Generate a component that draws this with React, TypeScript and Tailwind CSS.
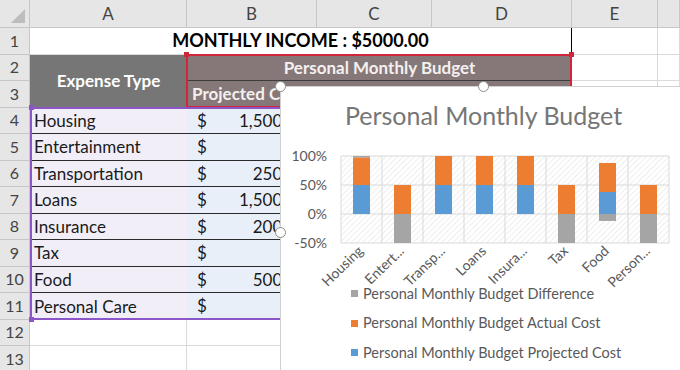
import React from 'react';

const font = { fontFamily: 'Lato, "Open Sans", sans-serif' };

const rows = [
  { name: 'Housing', value: '1,500.00' },
  { name: 'Entertainment', value: '' },
  { name: 'Transportation', value: '250.00' },
  { name: 'Loans', value: '1,500.00' },
  { name: 'Insurance', value: '200.00' },
  { name: 'Tax', value: '' },
  { name: 'Food', value: '500.00' },
  { name: 'Personal Care', value: '' },
];

const cats = ['Housing', 'Entert...', 'Transp...', 'Loans', 'Insura...', 'Tax', 'Food', 'Person...'];

// stacked values in percent
const bars = [
  { blue: [0, 50], orange: [50, 97], gray: [97, 100] },
  { orange: [0, 50], gray: [-50, 0] },
  { blue: [0, 50], orange: [50, 100] },
  { blue: [0, 50], orange: [50, 100] },
  { blue: [0, 50], orange: [50, 100] },
  { orange: [0, 50], gray: [-50, 0] },
  { blue: [0, 38], orange: [38, 88], gray: [-12, 0] },
  { orange: [0, 50], gray: [-50, 0] },
];

const colors: Record<string, string> = { blue: '#5b9bd5', orange: '#ed7d31', gray: '#a5a5a5' };

const Header = ({ children }: { children?: React.ReactNode }) => (
  <div className="bg-[#e6e6e6] border-r border-b border-[#c6c6c6] flex items-center justify-center text-[17px] text-[#444]">
    {children}
  </div>
);

const RowNum = ({ n }: { n: number }) => (
  <div className="bg-[#e6e6e6] border-r border-b border-[#c6c6c6] flex items-center justify-center text-[16px] text-[#444]">
    {n}
  </div>
);

const Cell = ({ className = '' }: { className?: string }) => (
  <div className={`bg-white border-r border-b border-[#dadada] ${className}`} />
);

const Handle = ({ className }: { className: string }) => (
  <div className={`absolute w-[5px] h-[5px] ${className}`} />
);

const Chart = () => {
  const x0 = 60;
  const cw = 41;
  const top = 25;
  const zero = 83;
  const k = 0.58;
  const y = (v: number) => zero - v * k;
  return (
    <div className="absolute left-[280px] top-[86px] w-[400px] h-[284px] bg-white border-l border-t border-[#d0d0d0] flex flex-col">
      <div className="pt-[13px] h-[44px] pl-[6px] text-center text-[25px] leading-[30px] text-[#767676]">
        Personal Monthly Budget
      </div>
      <svg width="400" height="148" className="block overflow-visible">
        <defs>
          <pattern id="hatch" width="4" height="4" patternUnits="userSpaceOnUse" patternTransform="rotate(45)">
            <line x1="0" y1="0" x2="0" y2="4" stroke="#e2e2e2" strokeWidth="1.2" />
          </pattern>
        </defs>
        <rect x={x0} y={top} width={cw * 8} height={zero - top + 29} fill="url(#hatch)" />
        {[100, 50, 0, -50].map((v) => (
          <g key={v}>
            <line x1={x0} x2={x0 + cw * 8} y1={y(v)} y2={y(v)} stroke="#d9d9d9" />
            <text x={46} y={y(v) + 5} textAnchor="end" fontSize="14" fill="#595959" style={font}>
              {v}%
            </text>
          </g>
        ))}
        {Array.from({ length: 9 }).map((_, i) => (
          <line key={i} x1={x0 + i * cw} x2={x0 + i * cw} y1={top} y2={y(-50)} stroke="#d9d9d9" />
        ))}
        {bars.map((b, i) =>
          (['gray', 'orange', 'blue'] as const).map((key) => {
            const seg = (b as Record<string, number[] | undefined>)[key];
            if (!seg) return null;
            return (
              <rect
                key={key + i}
                x={x0 + i * cw + 12}
                y={y(seg[1])}
                width={17}
                height={(seg[1] - seg[0]) * k}
                fill={colors[key]}
              />
            );
          })
        )}
        {cats.map((c, i) => {
          const cx = x0 + i * cw + 23;
          const cy = y(-50) + 9;
          return (
            <text
              key={c}
              x={cx}
              y={cy}
              textAnchor="end"
              fontSize="14"
              fill="#595959"
              transform={`rotate(-44 ${cx} ${cy})`}
              style={font}
            >
              {c}
            </text>
          );
        })}
      </svg>
      <div className="flex flex-col pl-[70px] text-[14.5px] text-[#595959]">
        {[
          ['#a5a5a5', 'Personal Monthly Budget Difference'],
          ['#ed7d31', 'Personal Monthly Budget Actual Cost'],
          ['#5b9bd5', 'Personal Monthly Budget Projected Cost'],
        ].map(([c, t]) => (
          <div key={t} className="h-[29.5px] flex items-center gap-[5px]">
            <span className="w-[7px] h-[7px] inline-block" style={{ backgroundColor: c }} />
            <span>{t}</span>
          </div>
        ))}
      </div>
      <div className="absolute -left-[6px] -top-[6px] w-[11px] h-[11px] rounded-full bg-white border border-[#8c8c8c]" />
      <div className="absolute left-[197px] -top-[6px] w-[11px] h-[11px] rounded-full bg-white border border-[#8c8c8c]" />
      <div className="absolute -left-[6px] top-[140px] w-[11px] h-[11px] rounded-full bg-white border border-[#8c8c8c]" />
    </div>
  );
};

export default function App() {
  return (
    <div className="w-[680px] h-[370px] overflow-hidden bg-white relative" style={font}>
      <div className="grid grid-cols-[30px_157px_130px_115px_140px_86px_1fr] grid-rows-[28px_repeat(13,26.5px)] relative">
        {/* column headers */}
        <div className="bg-[#e6e6e6] border-r border-b border-[#c6c6c6] relative">
          <div className="absolute right-[4px] bottom-[4px] w-0 h-0 border-l-[14px] border-l-transparent border-b-[14px] border-b-[#bdbdbd]" />
        </div>
        {['A', 'B', 'C', 'D', 'E'].map((c) => (
          <Header key={c}>{c}</Header>
        ))}
        <Header />

        {/* row 1 */}
        <RowNum n={1} />
        <div className="col-span-4 bg-white border-r border-r-black border-b border-b-[#dadada] flex items-center justify-center font-bold text-[18px] text-black">
          MONTHLY INCOME : $5000.00
        </div>
        <Cell />
        <Cell />

        {/* row 2 */}
        <RowNum n={2} />
        <div className="row-span-2 bg-[#767676] flex items-center justify-center font-bold text-[17px] text-white">
          Expense Type
        </div>
        <div className="col-span-3 bg-[#867878] border-b border-[#3c3c3c] flex items-center justify-center font-bold text-[17px] text-[#f4f0f0]">
          Personal Monthly Budget
        </div>
        <Cell />
        <Cell />

        {/* row 3 */}
        <RowNum n={3} />
        <div className="bg-[#867878] border-b border-[#3c3c3c] flex items-center pl-[5px] font-bold text-[17px] text-[#f4f0f0]">
          Projected Cost
        </div>
        <div className="bg-[#867878] border-b border-[#3c3c3c]" />
        <div className="bg-[#867878] border-b border-[#3c3c3c]" />
        <Cell />
        <Cell />

        {/* rows 4 - 11 */}
        {rows.map((r, i) => (
          <React.Fragment key={r.name}>
            <RowNum n={i + 4} />
            <div
              className={`bg-[#f1eef8] pl-[4px] flex items-center text-[17px] text-[#1a1a1a] ${
                i < rows.length - 1 ? 'border-b border-[#2a2a2a]' : ''
              }`}
            >
              {r.name}
            </div>
            <div
              className={`bg-[#e9eff9] pl-[10px] pr-[11px] flex items-center justify-between text-[17px] text-[#1a1a1a] ${
                i < rows.length - 1 ? 'border-b border-[#2a2a2a]' : 'border-b-2 border-[#2f75d6]'
              }`}
            >
              <span>$</span>
              <span>{r.value}</span>
            </div>
            <Cell />
            <Cell />
            <Cell />
            <Cell />
          </React.Fragment>
        ))}

        {/* rows 12 - 13 */}
        {[12, 13].map((n) => (
          <React.Fragment key={n}>
            <RowNum n={n} />
            <Cell />
            <Cell />
            <Cell />
            <Cell />
            <Cell />
            <Cell />
          </React.Fragment>
        ))}

        {/* selection outlines (out of flow, placed on grid areas) */}
        <div className="absolute inset-0 col-start-3 col-span-3 row-start-3 row-span-2 border-2 border-[#d0263a] pointer-events-none -ml-[1px] -mt-[1px]">
          <Handle className="bg-[#d0263a] -left-[4px] -top-[4px]" />
          <Handle className="bg-[#d0263a] -right-[4px] -top-[4px]" />
        </div>
        <div className="absolute inset-0 col-start-2 row-start-5 row-span-8 border-2 border-[#8a56c8] pointer-events-none -mt-[1px]">
          <Handle className="bg-[#8a56c8] -left-[3px] -top-[4px]" />
          <Handle className="bg-[#8a56c8] -right-[4px] -top-[4px]" />
          <Handle className="bg-[#8a56c8] -right-[4px] -bottom-[4px]" />
          <Handle className="bg-[#8a56c8] -left-[3px] -bottom-[4px]" />
        </div>
      </div>
      <Chart />
    </div>
  );
}
